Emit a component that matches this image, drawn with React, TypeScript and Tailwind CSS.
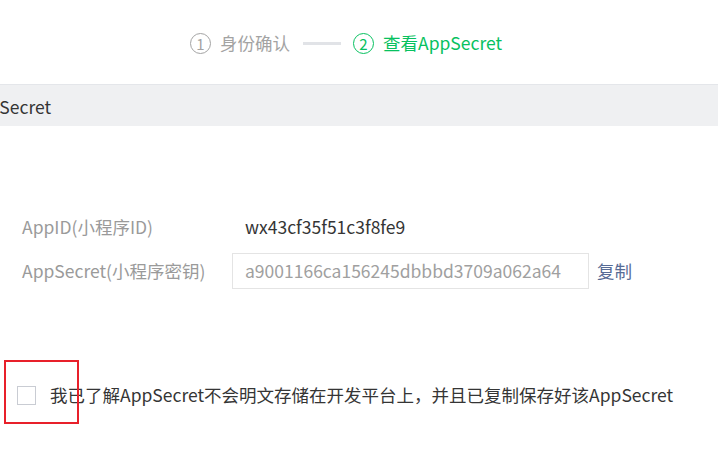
import React from 'react';

const font = { fontFamily: '"Noto Sans CJK SC", "Noto Sans", sans-serif' };

function StepDot({ n, active }: { n: number; active?: boolean }) {
  return (
    <span
      className={`flex h-[21px] w-[21px] items-center justify-center rounded-full border-[1.5px] text-[15px] leading-none ${
        active ? 'border-[#07c160] text-[#07c160]' : 'border-[#a3a3a3] text-[#a3a3a3]'
      }`}
    >
      {n}
    </span>
  );
}

export default function App() {
  return (
    <div className="relative h-[450px] w-[718px] overflow-hidden bg-white text-[17.5px]" style={font}>
      {/* Steps */}
      <div className="flex h-[84px] items-center pl-[190px] pt-[3px]">
        <StepDot n={1} />
        <span className="ml-[9px] text-[#a3a3a3]">身份确认</span>
        <span className="ml-[13px] h-[3px] w-[38px] bg-[#e1e3e7]" />
        <span className="ml-[12px]">
          <StepDot n={2} active />
        </span>
        <span className="ml-[9px] text-[#07c160]">查看AppSecret</span>
      </div>

      {/* Section header */}
      <div className="flex h-[42px] items-center border-t border-[#e4e6ea] bg-[#eff0f2] pt-[3px]">
        <span className="ml-[-33px] text-[#353535]">AppSecret</span>
      </div>

      {/* Fields */}
      <div className="pl-[22px] pt-[87px]">
        <div className="flex h-[28px] items-center">
          <span className="w-[223px] text-[#9a9a9a]">AppID(小程序ID)</span>
          <span className="text-[#353535]">wx43cf35f51c3f8fe9</span>
        </div>
        <div className="mt-[12px] flex items-center">
          <span className="w-[210px] text-[#9a9a9a]">AppSecret(小程序密钥)</span>
          <div className="flex h-[36px] w-[357px] items-center border border-[#e4e4e4] pl-[12px] text-[#a0a0a0]">
            a9001166ca156245dbbbd3709a062a64
          </div>
          <span className="ml-[8px] text-[#576b95]">复制</span>
        </div>
      </div>

      {/* Agreement */}
      <div className="mt-[93px] flex items-center pl-[17px]">
        <span className="h-[19px] w-[19px] border border-[#c9ccd3] bg-white" />
        <span className="ml-[14px] text-[#353535]">我已了解AppSecret不会明文存储在开发平台上，并且已复制保存好该AppSecret</span>
      </div>

      {/* Annotation box */}
      <div className="absolute left-[4px] top-[360px] h-[64px] w-[75px] border-2 border-[#e8202a]" />
    </div>
  );
}
